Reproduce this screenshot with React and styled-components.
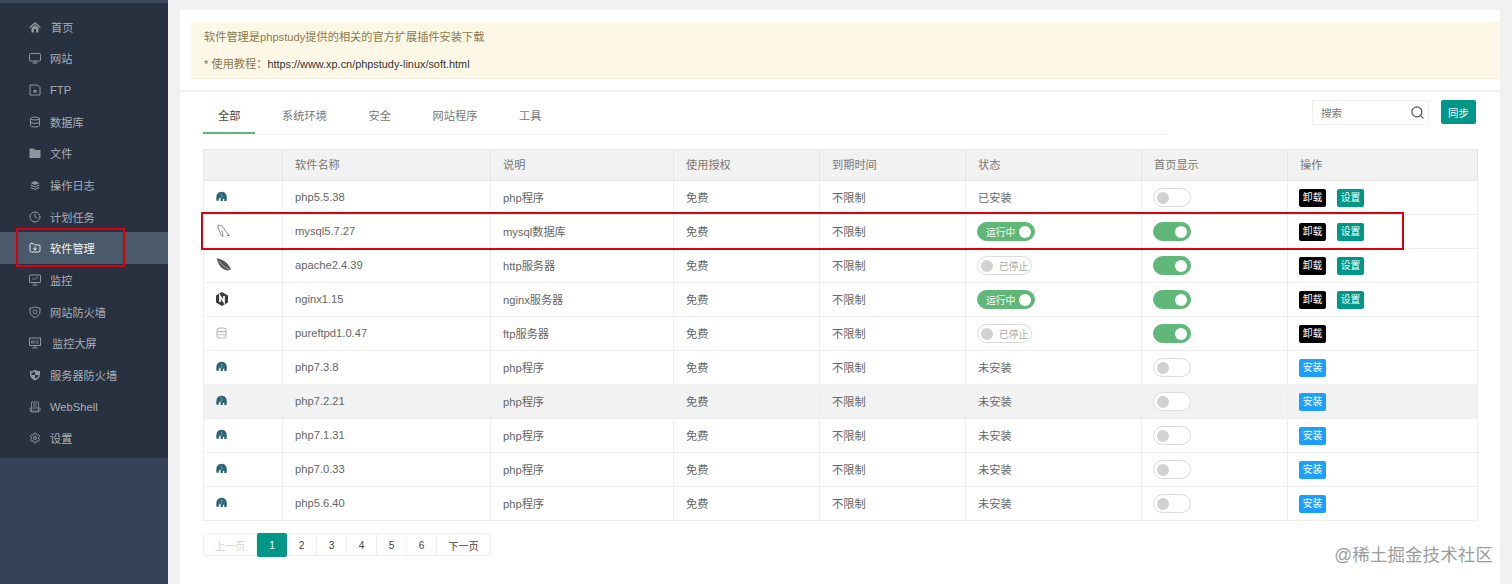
import React from 'react';
import styled, { createGlobalStyle } from 'styled-components';
import { Clock, Database, FolderDown, Search, Settings } from 'lucide-react';

const GlobalStyle = createGlobalStyle`
  html, body { margin: 0; padding: 0; }
  body {
    width: 1512px;
    height: 584px;
    overflow: hidden;
    background: #f1f1f1;
    font-family: "Liberation Sans", "Noto Sans CJK SC", sans-serif;
    font-size: 12px;
    color: #666;
  }
`;

const Page = styled.div`
  position: relative;
  display: flex;
  width: 1512px;
  height: 584px;
  overflow: hidden;
`;

const Sidebar = styled.aside`
  width: 168px;
  flex: none;
  background: #37425a;
  border-top: 3px solid #3d4a5e;
  box-sizing: border-box;
`;

const Menu = styled.ul`
  list-style: none;
  margin: 0;
  padding: 8px 0 4px;
  background: #28313f;
`;

const MenuItem = styled.li`
  display: flex;
  align-items: center;
  height: 31.65px;
  padding-left: 29px;
  gap: ${props => props.$gap || 9}px;
  font-size: 11.2px;
  color: ${props => (props.$active ? '#f1f3f4' : '#a9b0b8')};
  background: ${props => (props.$active ? '#4a5a6a' : 'transparent')};

  svg {
    width: 12px;
    height: 12px;
    flex: none;
    color: ${props => (props.$active ? '#e4e8ea' : '#8f97a1')};
  }
`;

const Main = styled.main`
  flex: 1;
  padding: 10px 12px 0;
  display: flex;
  flex-direction: column;
  gap: 2px;
  min-width: 0;
`;

const TopCard = styled.section`
  background: #fff;
  height: 80px;
  padding: 12px 0 0 11px;
  box-sizing: border-box;
`;

const Notice = styled.div`
  height: 57px;
  padding: 9px 13px;
  box-sizing: border-box;
  background: #fdf8e6;
  border-bottom: 1px solid #f3eedd;
  color: #8a7a4f;
  font-size: 11.2px;
  line-height: 12px;

  p {
    margin: 0 0 15px;
  }

  a {
    color: #333;
    font-size: 10.9px;
    text-decoration: none;
  }
`;

const ContentCard = styled.section`
  flex: 1;
  background: #fff;
  padding: 0 23px;
`;

const TabBar = styled.div`
  display: flex;
  align-items: flex-start;
  justify-content: space-between;
  height: 57px;
`;

const Tabs = styled.div`
  display: flex;
  width: 964px;
  height: 41px;
  margin-top: 1px;
  border-bottom: 1px solid #f4f4f4;
`;

const Tab = styled.div`
  height: 41px;
  box-sizing: border-box;
  padding: 16px 15px 0;
  margin-right: 11.7px;
  font-size: 11.2px;
  line-height: 14px;
  color: ${props => (props.$active ? '#444' : '#777')};
  box-shadow: ${props => (props.$active ? 'inset 0 -2px 0 #5fb878' : 'none')};
`;

const Tools = styled.div`
  display: flex;
  align-items: flex-start;
  gap: 12px;
  margin-top: 8px;
  margin-right: 1px;
`;

const SearchBox = styled.div`
  display: flex;
  align-items: center;
  justify-content: space-between;
  width: 117px;
  height: 25px;
  padding: 0 3px 0 8px;
  box-sizing: border-box;
  border: 1px solid #f0f0f0;
  color: #777;
  font-size: 10.6px;

  svg {
    width: 15px;
    height: 15px;
    color: #555;
  }
`;

const SyncButton = styled.button`
  width: 35px;
  height: 24px;
  padding: 0;
  border: 0;
  border-radius: 2px;
  background: #009688;
  color: #fff;
  font: inherit;
  font-size: 10.4px;
`;

const Table = styled.table`
  width: 1274px;
  table-layout: fixed;
  border-collapse: collapse;
  border: 1px solid #e6e6e6;
  font-size: 11.2px;
`;

const HeadCell = styled.th`
  height: 31px;
  padding: 0 12px 3px;
  box-sizing: border-box;
  text-align: left;
  font-weight: 400;
  color: #777;
  background: #f2f2f2;
  border: 1px solid #e6e6e6;
`;

const Row = styled.tr`
  height: 34px;
  background: ${props => (props.$hover ? '#f2f2f2' : '#fff')};
`;

const Cell = styled.td`
  padding: 0 12px 2px;
  box-sizing: border-box;
  border: 1px solid #eee;
  color: #666;
  white-space: nowrap;

  svg {
    display: block;
  }
`;

const Switch = styled.span`
  position: relative;
  display: inline-flex;
  align-items: center;
  box-sizing: border-box;
  vertical-align: middle;
  width: ${props => props.$width}px;
  height: 19px;
  margin: 2px 0 0 -1px;
  border-radius: 10px;
  border: 1px solid ${props => (props.$on ? '#5fb878' : '#dcdcdc')};
  background: ${props => (props.$on ? '#5fb878' : '#fff')};
  color: ${props => (props.$on ? '#fff' : '#a8a8a8')};
  font-size: 9.8px;
  padding: ${props => (props.$on ? '0 0 0 8px' : '0 0 0 21px')};

  &::after {
    content: '';
    position: absolute;
    top: 2.5px;
    left: ${props => (props.$on ? 'auto' : '3px')};
    right: ${props => (props.$on ? '3px' : 'auto')};
    width: 12px;
    height: 12px;
    border-radius: 50%;
    background: ${props => (props.$on ? '#fff' : '#d2d2d2')};
  }
`;

const ActionButton = styled.span`
  display: inline-block;
  width: 27px;
  height: 18px;
  margin: 2px 11px 0 0;
  border-radius: 2px;
  background: ${props => props.$color};
  color: #fff;
  text-align: center;
  vertical-align: middle;
  font-size: 9.8px;
  line-height: 18px;

  &:first-child {
    margin-left: -1px;
  }
`;

const Pager = styled.nav`
  display: flex;
  width: fit-content;
  margin-top: 12px;
  border: 1px solid #f0f0f0;
  border-radius: 2px;
  height: 23px;
  box-sizing: border-box;
  font-size: 10.2px;
`;

const PageItem = styled.span`
  display: flex;
  align-items: center;
  justify-content: center;
  box-sizing: border-box;
  width: ${props => props.$width}px;
  margin-top: -1px;
  height: 24px;
  border-right: ${props => (props.$last || props.$current ? '0' : '1px solid #f0f0f0')};
  border-radius: ${props => (props.$current ? '2px' : '0')};
  background: ${props => (props.$current ? '#009688' : 'transparent')};
  color: ${props => (props.$current ? '#fff' : props.$muted ? '#d2d2d2' : '#444')};
`;

const RedFrame = styled.div`
  position: absolute;
  left: ${props => props.$x}px;
  top: ${props => props.$y}px;
  width: ${props => props.$w}px;
  height: ${props => props.$h}px;
  box-sizing: border-box;
  border: 2px solid #d9000f;
  pointer-events: none;
`;

const Watermark = styled.div`
  position: absolute;
  right: 19px;
  top: 544px;
  font-size: 17.5px;
  line-height: 22px;
  color: #9d9d9d;
  letter-spacing: 0.1px;
`;

// sidebar icons, 24 box, drawn in currentColor
const line = { fill: 'none', stroke: 'currentColor', strokeWidth: 2 };

const HomeIcon = () => (
  <svg viewBox="0 0 24 24" fill="currentColor">
    <path d="M12 2 L24 13 L21 14 L12 6 L3 14 L0 13 Z" />
    <path d="M5 14 L12 8 L19 14 L19 23 L14 23 L14 16 L10 16 L10 23 L5 23 Z" />
  </svg>
);

const ScreenIcon = () => (
  <svg viewBox="0 0 24 24" {...line}>
    <rect x="1" y="3" width="22" height="15" rx="2" />
    <path d="M7 22 H17 M12 18 V22" />
  </svg>
);

const FtpIcon = () => (
  <svg viewBox="0 0 24 24" {...line}>
    <path d="M2 2 H17 L22 7 V22 H2 Z" />
    <rect x="9" y="12" width="6" height="5" fill="currentColor" stroke="none" />
  </svg>
);

const FolderIcon = () => (
  <svg viewBox="0 0 24 24" fill="currentColor">
    <path d="M1 3 H10 L12 6 H23 V22 H1 Z" />
  </svg>
);

const LogIcon = () => (
  <svg viewBox="0 0 24 24" fill="currentColor">
    <path d="M12 4 L21 8 L12 12 L3 8 Z" />
    <path d="M4 11 L12 15 L20 11 L21 13 L12 17 L3 13 Z" />
    <path d="M4 16 L12 20 L20 16 L21 18 L12 22 L3 18 Z" />
  </svg>
);

const ChartIcon = () => (
  <svg viewBox="0 0 24 24" {...line}>
    <rect x="1" y="2" width="22" height="15" rx="1" />
    <path d="M5 12 L9 9 L12 11 L18 6 M6 22 H18 M12 17 V22" strokeWidth="1.6" />
  </svg>
);

const ShieldIcon = () => (
  <svg viewBox="0 0 24 24" {...line}>
    <path d="M2 4 C7 4 10 3 12 1 C14 3 17 4 22 4 V11 C22 17 17 21 12 23 C7 21 2 17 2 11 Z" />
    <rect x="8.5" y="8" width="7" height="7" rx="1" strokeWidth="1.6" />
  </svg>
);

const BigScreenIcon = () => (
  <svg viewBox="0 0 24 24" {...line}>
    <rect x="1" y="2" width="22" height="15" />
    <path d="M5 12 V8 H10 V12 Z M13 8 H19 M13 12 H19 M6 22 H18 M12 17 V22" strokeWidth="1.6" />
  </svg>
);

const HalfShieldIcon = () => (
  <svg viewBox="0 0 24 24">
    <path
      fill="currentColor"
      d="M2 4 C7 4 10 3 12 1 C14 3 17 4 22 4 V11 C22 17 17 21 12 23 C7 21 2 17 2 11 Z"
    />
    <path fill="#28313f" d="M12 5 V12 H5 V7 C8 7 10 6 12 5 Z M12 12 H19 C19 15 16 18 12 19 Z" />
  </svg>
);

const ShellIcon = () => (
  <svg viewBox="0 0 24 24" {...line} strokeWidth="1.6">
    <path d="M5 2 H19 V22 H5 Z M2 14 H22 V20 H2 Z" />
    <path d="M8 6 H16 M8 10 H16" />
  </svg>
);

// table icons
const Elephant = () => (
  <svg width="11" height="11" viewBox="0 0 24 24">
    <path
      fill="#2f6478"
      d="M1 21 C0 13 1 7 5 4 C10 0 19 1 22 7 C24 11 24 17 23 22 L18 22 L18 17 L15 17 L15 22 L10 22 L10 14 C7 14 6 17 6 21 Z"
    />
    <path fill="none" stroke="#9fc0cc" strokeWidth="1.6" d="M10 6 C13 7 14 11 12 14" />
  </svg>
);

const Dolphin = () => (
  <svg width="15" height="15" viewBox="0 0 24 24" fill="none" stroke="#777" strokeWidth="1.4">
    <path d="M3 4 C3 10 6 14 9 20 L11 22 C11 18 11 16 9 12 M3 4 C9 3 12 7 14 11 C16 15 19 17 22 20 L18 20" />
  </svg>
);

const Feather = () => (
  <svg width="15" height="15" viewBox="0 0 24 24">
    <path fill="#555" d="M1 2 C3 9 6 19 17 21 C20 22 22 21 24 20 C20 10 11 3 1 2 Z" />
    <path stroke="#ddd" strokeWidth="1" fill="none" d="M4 6 C9 12 15 17 22 20" />
  </svg>
);

const Nginx = () => (
  <svg width="12" height="14" viewBox="0 0 24 28">
    <path fill="#3c3c3c" d="M12 0 L24 7 L24 21 L12 28 L0 21 L0 7 Z" />
    <path fill="none" stroke="#fff" strokeWidth="3.4" d="M8 20 L8 8 L16 20 L16 8" />
  </svg>
);

const Storage = () => (
  <svg width="11" height="12" viewBox="0 0 24 26" fill="none" stroke="#bbb" strokeWidth="2.2">
    <rect x="2" y="2" width="20" height="22" rx="6" />
    <path d="M2 10 H22 M2 17 H22" />
  </svg>
);

const menu = [
  { Icon: HomeIcon, label: '首页', gap: 10 },
  { Icon: ScreenIcon, label: '网站' },
  { Icon: FtpIcon, label: 'FTP' },
  { Icon: Database, label: '数据库' },
  { Icon: FolderIcon, label: '文件' },
  { Icon: LogIcon, label: '操作日志' },
  { Icon: Clock, label: '计划任务' },
  { Icon: FolderDown, label: '软件管理', active: true },
  { Icon: ChartIcon, label: '监控' },
  { Icon: ShieldIcon, label: '网站防火墙' },
  { Icon: BigScreenIcon, label: '监控大屏', gap: 11 },
  { Icon: HalfShieldIcon, label: '服务器防火墙' },
  { Icon: ShellIcon, label: 'WebShell' },
  { Icon: Settings, label: '设置' }
];

const tabs = [
  { label: '全部', active: true },
  { label: '系统环境' },
  { label: '安全' },
  { label: '网站程序' },
  { label: '工具' }
];

const columns = [
  { title: '', width: 79 },
  { title: '软件名称', width: 208 },
  { title: '说明', width: 183 },
  { title: '使用授权', width: 146 },
  { title: '到期时间', width: 146 },
  { title: '状态', width: 176 },
  { title: '首页显示', width: 146 },
  { title: '操作', width: 190 }
];

const rows = [
  { icon: <Elephant />, name: 'php5.5.38', desc: 'php程序', status: '已安装', home: false, ops: ['remove', 'set'] },
  { icon: <Dolphin />, name: 'mysql5.7.27', desc: 'mysql数据库', running: true, home: true, ops: ['remove', 'set'] },
  { icon: <Feather />, name: 'apache2.4.39', desc: 'http服务器', running: false, home: true, ops: ['remove', 'set'] },
  { icon: <Nginx />, name: 'nginx1.15', desc: 'nginx服务器', running: true, home: true, ops: ['remove', 'set'] },
  { icon: <Storage />, name: 'pureftpd1.0.47', desc: 'ftp服务器', running: false, home: true, ops: ['remove'] },
  { icon: <Elephant />, name: 'php7.3.8', desc: 'php程序', status: '未安装', home: false, ops: ['install'] },
  { icon: <Elephant />, name: 'php7.2.21', desc: 'php程序', status: '未安装', home: false, ops: ['install'], hover: true },
  { icon: <Elephant />, name: 'php7.1.31', desc: 'php程序', status: '未安装', home: false, ops: ['install'] },
  { icon: <Elephant />, name: 'php7.0.33', desc: 'php程序', status: '未安装', home: false, ops: ['install'] },
  { icon: <Elephant />, name: 'php5.6.40', desc: 'php程序', status: '未安装', home: false, ops: ['install'] }
];

const ops = {
  remove: { label: '卸载', color: '#000' },
  set: { label: '设置', color: '#009688' },
  install: { label: '安装', color: '#1e9fff' }
};

const pages = [
  { label: '上一页', width: 53, muted: true },
  { label: '1', width: 30, current: true },
  { label: '2', width: 30 },
  { label: '3', width: 30 },
  { label: '4', width: 30 },
  { label: '5', width: 30 },
  { label: '6', width: 30 },
  { label: '下一页', width: 53, last: true }
];

const RunState = ({ running }) => (
  <Switch $on={running} $width={running ? 58 : 55}>
    {running ? '运行中' : '已停止'}
  </Switch>
);

export default function App() {
  return (
    <Page>
      <GlobalStyle />
      <Sidebar>
        <Menu>
          {menu.map(({ Icon, label, gap, active }) => (
            <MenuItem key={label} $gap={gap} $active={active}>
              <Icon />
              {label}
            </MenuItem>
          ))}
        </Menu>
      </Sidebar>
      <Main>
        <TopCard>
          <Notice>
            <p>软件管理是phpstudy提供的相关的官方扩展插件安装下载</p>
            <p>* 使用教程：<a href="#soft">https://www.xp.cn/phpstudy-linux/soft.html</a></p>
          </Notice>
        </TopCard>
        <ContentCard>
          <TabBar>
            <Tabs>
              {tabs.map(tab => (
                <Tab key={tab.label} $active={tab.active}>{tab.label}</Tab>
              ))}
            </Tabs>
            <Tools>
              <SearchBox>
                搜索
                <Search />
              </SearchBox>
              <SyncButton>同步</SyncButton>
            </Tools>
          </TabBar>
          <Table>
            <colgroup>
              {columns.map(col => <col key={col.title || 'icon'} style={{ width: col.width }} />)}
            </colgroup>
            <thead>
              <tr>
                {columns.map(col => <HeadCell key={col.title || 'icon'}>{col.title}</HeadCell>)}
              </tr>
            </thead>
            <tbody>
              {rows.map(row => (
                <Row key={row.name} $hover={row.hover}>
                  <Cell>{row.icon}</Cell>
                  <Cell>{row.name}</Cell>
                  <Cell>{row.desc}</Cell>
                  <Cell>免费</Cell>
                  <Cell>不限制</Cell>
                  <Cell>{row.status || <RunState running={row.running} />}</Cell>
                  <Cell><Switch $on={row.home} $width={38} /></Cell>
                  <Cell>
                    {row.ops.map(op => (
                      <ActionButton key={op} $color={ops[op].color}>{ops[op].label}</ActionButton>
                    ))}
                  </Cell>
                </Row>
              ))}
            </tbody>
          </Table>
          <Pager>
            {pages.map(item => (
              <PageItem
                key={item.label}
                $width={item.width}
                $current={item.current}
                $muted={item.muted}
                $last={item.last}
              >
                {item.label}
              </PageItem>
            ))}
          </Pager>
        </ContentCard>
      </Main>
      <RedFrame $x={16} $y={228} $w={109} $h={39} />
      <RedFrame $x={201} $y={212} $w={1203} $h={38} />
      <Watermark>@稀土掘金技术社区</Watermark>
    </Page>
  );
}
